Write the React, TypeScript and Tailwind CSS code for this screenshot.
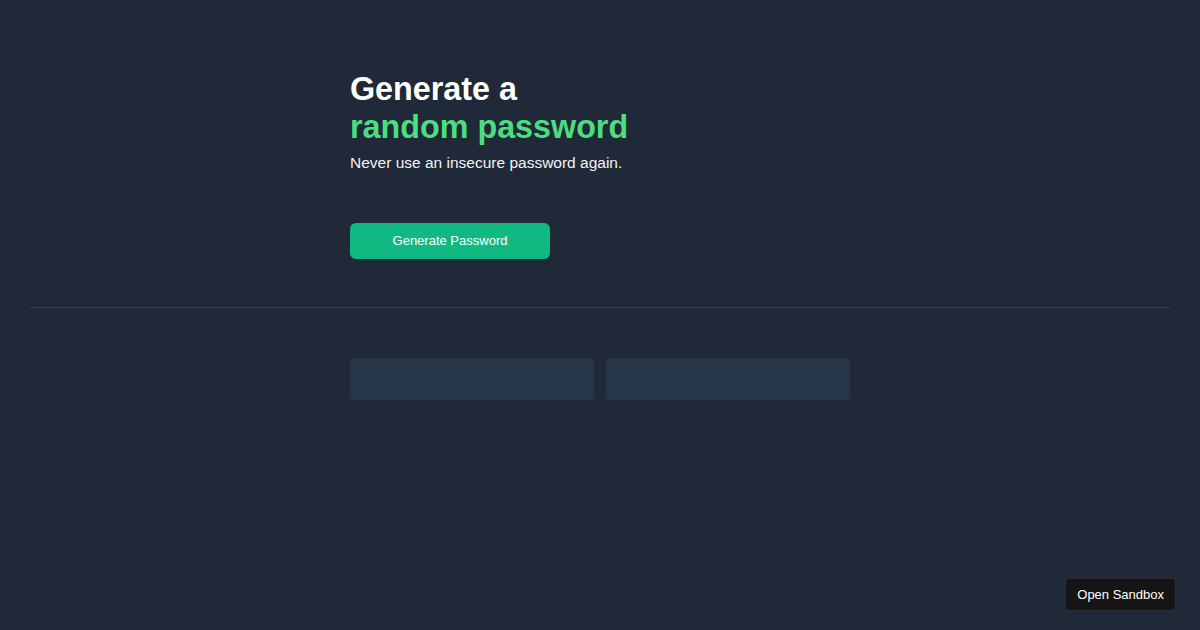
export default function App() {
  return (
    <div
      className="min-h-[630px] w-full bg-[#1f2937] text-white relative"
      style={{ fontFamily: '"Liberation Sans", Arial, sans-serif' }}
    >
      <div className="pt-[70px]">
        <div className="mx-auto w-[500px]">
          <h1 className="text-[32.3px] leading-[38px] font-bold">
            <span className="block text-white">Generate a</span>
            <span className="block text-[#4ade80]">random password</span>
          </h1>
          <p className="mt-[5px] text-[15.5px] leading-[24px] text-[#f3f4f6]">
            Never use an insecure password again.
          </p>
          <button className="mt-[48px] h-[36px] w-[200px] rounded-md bg-[#10b981] text-[13px] text-white">
            Generate Password
          </button>
        </div>
        <div className="px-[30px] mt-[48px]">
          <div className="h-px bg-[#334155]" />
        </div>
        <div className="mx-auto w-[500px] mt-[50px] grid grid-cols-2 gap-[12px]">
          <div className="h-[42px] rounded bg-[#273549]" />
          <div className="h-[42px] rounded bg-[#273549]" />
        </div>
      </div>
      <div className="absolute right-[24px] bottom-[19px] h-[33px] px-[11px] flex items-center rounded bg-[#151515] border border-[#2e2e2e] text-[13px] text-white">
        Open Sandbox
      </div>
    </div>
  );
}
